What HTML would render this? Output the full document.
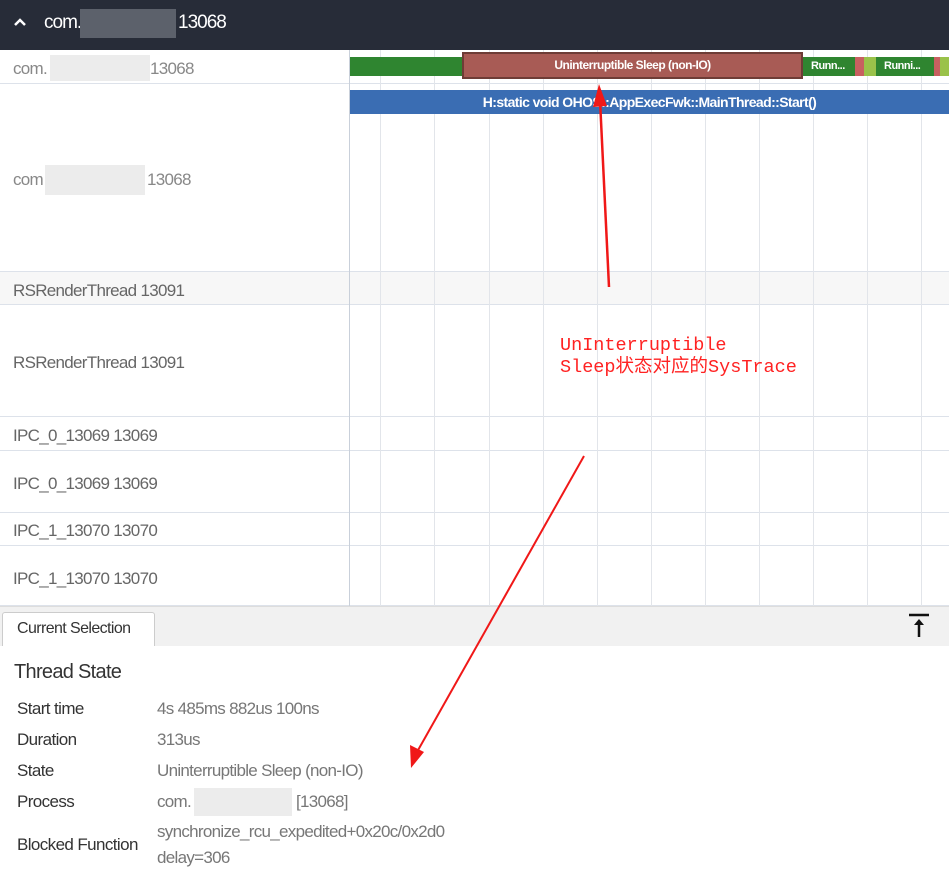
<!DOCTYPE html>
<html><head><meta charset="utf-8"><style>
*{margin:0;padding:0;box-sizing:border-box}
body{width:949px;height:874px;overflow:hidden;background:#fff;font-family:"Liberation Sans",sans-serif;position:relative}
.a{position:absolute}
.lbl{position:absolute;left:13px;color:#666;font-size:17px;letter-spacing:-0.7px}
.row{position:absolute;left:0;width:949px;border-bottom:1px solid #dde2ea}
.blur{position:absolute;background:#ececec}
.k{position:absolute;left:17px;font-size:17px;color:#333;letter-spacing:-0.6px}
.v{position:absolute;left:157px;font-size:17px;color:#777;letter-spacing:-0.7px}
</style></head><body>
<div class="a" style="left:0;top:0;width:949px;height:50px;background:#272c38"></div>
<svg class="a" style="left:12px;top:15px" width="16" height="14"><path d="M3 10 L8 5 L13 10" stroke="#fff" stroke-width="2.5" fill="none"/></svg>
<div class="a" style="left:44px;top:12px;color:#fff;font-size:19px;letter-spacing:-1px">com.</div>
<div class="a" style="left:80px;top:9px;width:96px;height:29px;background:#5c616b"></div>
<div class="a" style="left:178px;top:12px;color:#fff;font-size:19px;letter-spacing:-1px">13068</div>

<div class="row" style="top:50px;height:34px"></div>
<div class="row" style="top:84px;height:188px"></div>
<div class="row" style="top:272px;height:33px;background:#f7f7f7"></div>
<div class="row" style="top:305px;height:112px"></div>
<div class="row" style="top:417px;height:34px"></div>
<div class="row" style="top:451px;height:62px"></div>
<div class="row" style="top:513px;height:33px"></div>
<div class="row" style="top:546px;height:60px"></div>
<div class="a" style="left:349px;top:50px;width:1px;height:556px;background:#c9d0da"></div>
<svg class="a" style="left:350px;top:50px" width="599" height="556">
<g stroke="#e2e5ea" stroke-width="1">
<line x1="30.5" y1="0" x2="30.5" y2="556"/><line x1="84.5" y1="0" x2="84.5" y2="556"/><line x1="139.5" y1="0" x2="139.5" y2="556"/><line x1="193.5" y1="0" x2="193.5" y2="556"/><line x1="247.5" y1="0" x2="247.5" y2="556"/><line x1="301.5" y1="0" x2="301.5" y2="556"/><line x1="355.5" y1="0" x2="355.5" y2="556"/><line x1="409.5" y1="0" x2="409.5" y2="556"/><line x1="463.5" y1="0" x2="463.5" y2="556"/><line x1="517.5" y1="0" x2="517.5" y2="556"/><line x1="571.5" y1="0" x2="571.5" y2="556"/>
</g></svg>

<div class="lbl" style="top:59px;color:#888">com.</div>
<div class="blur" style="left:50px;top:55px;width:100px;height:26px"></div>
<div class="lbl" style="left:150px;top:59px;color:#888">13068</div>
<div class="lbl" style="top:170px;color:#888">com</div>
<div class="blur" style="left:45px;top:165px;width:100px;height:30px"></div>
<div class="lbl" style="left:147px;top:170px;color:#888">13068</div>
<div class="lbl" style="top:281px">RSRenderThread 13091</div>
<div class="lbl" style="top:353px">RSRenderThread 13091</div>
<div class="lbl" style="top:426px">IPC_0_13069 13069</div>
<div class="lbl" style="top:474px">IPC_0_13069 13069</div>
<div class="lbl" style="top:521px">IPC_1_13070 13070</div>
<div class="lbl" style="top:569px">IPC_1_13070 13070</div>

<div class="a" style="left:350px;top:57px;width:599px;height:19px;background:#2f8530"></div>
<div class="a" style="left:462px;top:52px;width:341px;height:27px;background:#a85b55;border:2px solid #6e3c36;color:#fff;font-size:12px;text-align:center;line-height:23px;font-weight:bold;letter-spacing:-0.5px">Uninterruptible Sleep (non-IO)</div>
<div class="a" style="left:808px;top:57px;width:50px;height:19px;color:#fff;font-size:11px;font-weight:bold;line-height:19px;padding-left:3px;letter-spacing:-0.5px">Runn...</div>
<div class="a" style="left:855px;top:57px;width:9px;height:19px;background:#c86060"></div>
<div class="a" style="left:864px;top:57px;width:12px;height:19px;background:#9ac24a"></div>
<div class="a" style="left:884px;top:57px;width:50px;height:19px;color:#fff;font-size:11px;font-weight:bold;line-height:19px;letter-spacing:-0.5px">Runni...</div>
<div class="a" style="left:934px;top:57px;width:6px;height:19px;background:#c86060"></div>
<div class="a" style="left:940px;top:57px;width:9px;height:19px;background:#9ac24a"></div>
<div class="a" style="left:350px;top:90px;width:599px;height:24px;background:#3a6db3;color:#fff;font-size:14px;font-weight:bold;text-align:center;line-height:24px;letter-spacing:-0.6px">H:static void OHOS::AppExecFwk::MainThread::Start()</div>

<div class="a" style="left:0;top:606px;width:949px;height:40px;background:#f1f1f1;border-top:1px solid #ddd"></div>
<div class="a" style="left:2px;top:612px;width:153px;height:34px;background:#fff;border:1px solid #ccc;border-bottom:none;border-radius:3px 3px 0 0;font-size:16px;color:#333;padding:7px 0 0 14px;letter-spacing:-0.6px">Current Selection</div>
<svg class="a" style="left:906px;top:612px" width="26" height="28"><line x1="3" y1="3" x2="23" y2="3" stroke="#111" stroke-width="2.5"/><line x1="13" y1="10" x2="13" y2="25" stroke="#111" stroke-width="2.5"/><path d="M8 13 L13 7 L18 13" fill="#111"/></svg>

<div class="a" style="left:14px;top:661px;font-size:20px;color:#333;letter-spacing:-0.7px">Thread State</div>
<div class="k" style="top:699px">Start time</div><div class="v" style="top:699px">4s 485ms 882us 100ns</div>
<div class="k" style="top:730px">Duration</div><div class="v" style="top:730px">313us</div>
<div class="k" style="top:761px">State</div><div class="v" style="top:761px">Uninterruptible Sleep (non-IO)</div>
<div class="k" style="top:792px">Process</div><div class="v" style="top:792px">com.</div>
<div class="blur" style="left:194px;top:788px;width:98px;height:28px"></div>
<div class="v" style="left:296px;top:792px">[13068]</div>
<div class="k" style="top:835px">Blocked Function</div>
<div class="v" style="top:822px">synchronize_rcu_expedited+0x20c/0x2d0</div>
<div class="v" style="top:848px">delay=306</div>

<div class="a" style="left:560px;top:335px;color:#f22;font-family:'Liberation Mono','Noto Sans CJK SC',monospace;font-size:18.5px;line-height:22px">UnInterruptible<br>Sleep状态对应的SysTrace</div>
<svg class="a" style="left:0;top:0" width="949" height="874">
<line x1="609" y1="287" x2="600" y2="100" stroke="#f01818" stroke-width="2.5"/>
<path d="M593 107 L599 84 L607 106 Z" fill="#f01818"/>
<line x1="584" y1="456" x2="417" y2="752" stroke="#f01818" stroke-width="2"/>
<path d="M410 745 L411 768 L424 752 Z" fill="#f01818"/>
</svg>
</body></html>
